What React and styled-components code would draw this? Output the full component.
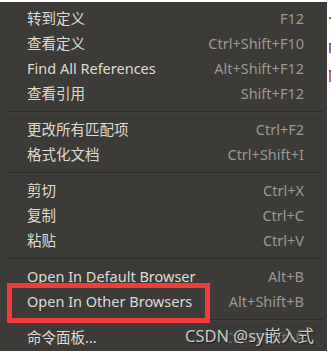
import React from 'react'
import styled, { createGlobalStyle } from 'styled-components'

const Global = createGlobalStyle`
  html, body { margin: 0; padding: 0; background: #ffffff; }
  body { font-family: "Noto Sans", "Noto Sans CJK SC", sans-serif; }
`

const groups = [
  [
    ['转到定义', 'F12'],
    ['查看定义', 'Ctrl+Shift+F10'],
    ['Find All References', 'Alt+Shift+F12'],
    ['查看引用', 'Shift+F12'],
  ],
  [
    ['更改所有匹配项', 'Ctrl+F2'],
    ['格式化文档', 'Ctrl+Shift+I'],
  ],
  [
    ['剪切', 'Ctrl+X'],
    ['复制', 'Ctrl+C'],
    ['粘贴', 'Ctrl+V'],
  ],
  [
    ['Open In Default Browser', 'Alt+B'],
    ['Open In Other Browsers', 'Alt+Shift+B'],
  ],
  [['命令面板...', 'Ctrl+Shift+P']],
]

// gutter marks of the editor behind the menu: [colour, gap above, height]
const marks = [
  ['#2f9a3a', 17, 2],
  ['#d23a4a', 24, 2],
  ['#b06ab8', 0, 8],
  ['#d23a4a', 17, 2],
  ['#b06ab8', 0, 10],
]

const Page = styled.div`
  position: relative;
  display: flex;
  width: 331px;
  height: 354px;
  overflow: hidden;
`

const Menu = styled.div`
  margin-top: 2px;
  width: 327px;
  height: 349px;
  flex-shrink: 0;
  background: #3c3b37;
  padding: 4px 0 1px;
  box-sizing: border-box;
`

const Gutter = styled.div`
  flex: 1;
  display: flex;
  flex-direction: column;
  align-items: flex-end;
`

const Mark = styled.div`
  width: 2px;
  background: ${(p) => p.$c};
`

const Row = styled.div`
  display: flex;
  align-items: center;
  justify-content: space-between;
  height: 25px;
  box-sizing: border-box;
  padding: 0 23px 2px 27px;
  font-size: 14.5px;
`

const Label = styled.span`
  color: #dfdbd2;
  white-space: nowrap;
`

const Key = styled.span`
  color: ${(p) => (p.$faded ? '#6f6d67' : '#9b9891')};
  white-space: nowrap;
`

const Separator = styled.div`
  height: 11px;
  display: flex;
  align-items: center;
  padding: 0 4px 0 7px;
  &::before {
    content: '';
    flex: 1;
    height: 1px;
    background: #2d2c29;
    border-bottom: 1px solid #42413d;
  }
`

const Highlight = styled.div`
  position: absolute;
  left: 7px;
  top: 283px;
  width: 203px;
  height: 40px;
  box-sizing: border-box;
  border: 5px solid #f43b3b;
`

const Watermark = styled.div`
  position: absolute;
  left: 185px;
  top: 323px;
  font-size: 16.5px;
  color: #c9c9c9;
  text-shadow: 1px 1px 1px #1e1e1c;
  white-space: nowrap;
`

export default function App() {
  return (
    <Page>
      <Global />
      <Menu>
        {groups.map((g, gi) => (
          <React.Fragment key={gi}>
            {gi > 0 && <Separator />}
            {g.map(([label, key]) => (
              <Row key={label}>
                <Label>{label}</Label>
                <Key $faded={key === 'Ctrl+Shift+P'}>{key}</Key>
              </Row>
            ))}
          </React.Fragment>
        ))}
      </Menu>
      <Gutter>
        {marks.map(([c, gap, h], i) => (
          <Mark key={i} $c={c} style={{ marginTop: gap, height: h }} />
        ))}
      </Gutter>
      <Highlight />
      <Watermark>CSDN @sy嵌入式</Watermark>
    </Page>
  )
}
